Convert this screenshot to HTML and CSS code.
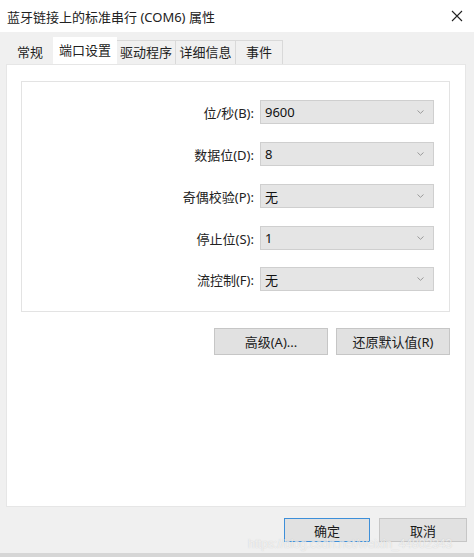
FILE: index.html
```html
<!DOCTYPE html>
<html lang="zh-CN">
<head>
<meta charset="utf-8">
<title>蓝牙链接上的标准串行 (COM6) 属性</title>
<link rel="stylesheet" href="styles.css">
</head>
<body>
<div class="window">
  <div class="titlebar">
    <span class="title">蓝牙链接上的标准串行 (COM6) 属性</span>
    <svg class="close" width="12" height="12" viewBox="0 0 12 12"><path d="M1 1L11 11M11 1L1 11" stroke="#222" stroke-width="1.1" fill="none"/></svg>
  </div>
  <div class="body">
    <div class="tabs">
      <div class="tab t1">常规</div>
      <div class="tab active t2">端口设置</div>
      <div class="tab t3">驱动程序</div>
      <div class="tab t4">详细信息</div>
      <div class="tab t5">事件</div>
    </div>
    <div class="panel">
      <div class="group">
        <div class="row"><span class="label">位/秒(B):</span><div class="combo"><span>9600</span><svg class="chev" width="7" height="4" viewBox="0 0 7 4"><path d="M0.5 0.5L3.5 3.3L6.5 0.5" stroke="#9a9a9a" fill="none"/></svg></div></div>
        <div class="row"><span class="label">数据位(D):</span><div class="combo"><span>8</span><svg class="chev" width="7" height="4" viewBox="0 0 7 4"><path d="M0.5 0.5L3.5 3.3L6.5 0.5" stroke="#9a9a9a" fill="none"/></svg></div></div>
        <div class="row"><span class="label">奇偶校验(P):</span><div class="combo"><span>无</span><svg class="chev" width="7" height="4" viewBox="0 0 7 4"><path d="M0.5 0.5L3.5 3.3L6.5 0.5" stroke="#9a9a9a" fill="none"/></svg></div></div>
        <div class="row"><span class="label">停止位(S):</span><div class="combo"><span>1</span><svg class="chev" width="7" height="4" viewBox="0 0 7 4"><path d="M0.5 0.5L3.5 3.3L6.5 0.5" stroke="#9a9a9a" fill="none"/></svg></div></div>
        <div class="row"><span class="label">流控制(F):</span><div class="combo"><span>无</span><svg class="chev" width="7" height="4" viewBox="0 0 7 4"><path d="M0.5 0.5L3.5 3.3L6.5 0.5" stroke="#9a9a9a" fill="none"/></svg></div></div>
      </div>
      <div class="actions">
        <button class="btn wide">高级(A)...</button>
        <button class="btn wide">还原默认值(R)</button>
      </div>
    </div>
    <div class="footer">
      <button class="btn ok default">确定</button>
      <button class="btn cancel">取消</button>
      <span class="watermark">https://blog.csdn.net/weixin_44802343</span>
    </div>
  </div>
  <div class="bottomedge"></div>
</div>
</body>
</html>
```
FILE: styles.css
```css
* { box-sizing: border-box; }
html, body { margin: 0; padding: 0; background: #f0f0f0; }
body {
  font-family: "Noto Sans", "Noto Sans CJK SC", sans-serif;
  font-size: 13px;
  color: #1b1b1b;
}
.window { width: 474px; height: 557px; display: flex; flex-direction: column; overflow: hidden; }
.titlebar {
  height: 32px; background: #fff; display: flex; align-items: center;
  justify-content: space-between; padding: 0 11px 0 7px; flex: none;
}
.title { font-size: 13px; color: #222; }
.body {
  flex: 1; background: #f0f0f0; padding: 5px 8px 0 6px;
  display: flex; flex-direction: column; position: relative;
}
.tabs { display: flex; height: 27px; align-items: flex-end; flex: none; }
.tab {
  height: 24px; line-height: 22px; border: 1px solid #d9d9d9; border-bottom: none;
  background: #f0f0f0; color: #222; font-size: 13px; padding: 0; margin-right: -1px;
  white-space: nowrap; display: flex; justify-content: center;
}
.tab.t1 { width: 48px; border-left-color: #f0f0f0; border-top-color: #f0f0f0; border-right-color: #f0f0f0; }
.tab.active { height: 27px; line-height: 24px; background: #fff; width: 64px; border-color: #fff; position: relative; z-index: 1; }
.tab.t3 { width: 60px; }
.tab.t4 { width: 61px; }
.tab.t5 { width: 48px; }
.panel {
  height: 443px; background: #fff; border: 1px solid #e6e6e6; flex: none;
  padding: 16px 0 0 14px;
}
.group {
  width: 429px; height: 231px; border: 1px solid #e3e3e3;
  padding: 18px 15px 0 0; display: flex; flex-direction: column; gap: 18px;
}
.group .row:nth-child(5) { margin-top: -1px; }
.row { display: flex; justify-content: flex-end; align-items: center; gap: 6px; height: 24px; }
.label { color: #222; }
.combo {
  width: 174px; height: 24px; background: #e5e5e5; border: 1px solid #cfcfcf;
  display: flex; align-items: center; justify-content: space-between; padding: 0 9px 0 4px;
  color: #111;
}
.actions { display: flex; justify-content: flex-end; gap: 8px; margin-top: 16px; width: 429px; }
.btn {
  font-family: inherit; font-size: 13px; color: #1b1b1b; background: #e1e1e1;
  border: 1px solid #c6c6c6; padding: 0; margin: 0; height: 27px;
}
.btn.wide { width: 114px; }
.footer { display: flex; justify-content: flex-end; gap: 9px; padding-top: 11px; margin-right: -1px; }
.btn.ok, .btn.cancel { height: 24px; }
.btn.ok { width: 86px; }
.btn.cancel { width: 88px; }
.btn.default { border: 1px solid #3d8fd9; }
.watermark {
  position: absolute; left: 248px; top: 505px; font-size: 12px; color: rgba(255,255,255,0.7);
  text-shadow: 0 0 1px rgba(160,160,160,0.55); font-family: "Liberation Sans", sans-serif;
}
.bottomedge { height: 4px; background: #d6d6d6; flex: none; }
```
